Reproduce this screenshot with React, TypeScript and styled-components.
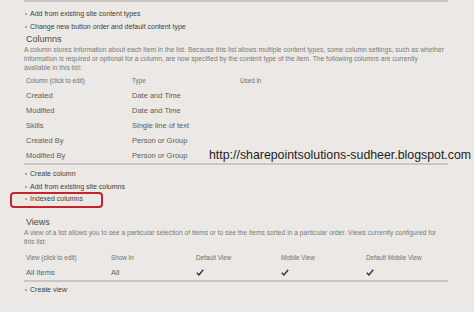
import React from "react";
import styled, { createGlobalStyle } from "styled-components";

const GlobalStyle = createGlobalStyle`
    html, body {
        margin: 0;
        padding: 0;
        background: #ebe8e5;
    }
    body {
        font-family: "Liberation Sans", Arial, sans-serif;
        color: #555;
    }
`

const columns = [
    {name: "Created", type: "Date and Time"},
    {name: "Modified", type: "Date and Time"},
    {name: "Skills", type: "Single line of text"},
    {name: "Created By", type: "Person or Group"},
    {name: "Modified By", type: "Person or Group"},
]

const Check = () => (
    <svg width="8" height="7" viewBox="0 0 8 7">
        <path d="M0.8 3.8 L2.9 5.9 L7.2 0.8" fill="none" stroke="#333" strokeWidth="1.4"/>
    </svg>
)

export default function App() {
    return (
        <Page>
            <GlobalStyle/>
            <Content>
                <Links $gap={2}>
                    <LinkItem>Add from existing site content types</LinkItem>
                    <LinkItem>Change new button order and default content type</LinkItem>
                </Links>
                <SectionTitle>Columns</SectionTitle>
                <Description>
                    A column stores information about each item in the list. Because this list allows multiple content types, some column settings, such as whether<br/>
                    information is required or optional for a column, are now specified by the content type of the item. The following columns are currently<br/>
                    available in this list:
                </Description>
                <ColumnTable>
                    <HeadCell>Column (click to edit)</HeadCell>
                    <HeadCell>Type</HeadCell>
                    <HeadCell>Used in</HeadCell>
                    {columns.map(c => (
                        <React.Fragment key={c.name}>
                            <Cell>{c.name}</Cell>
                            <Cell>{c.type}</Cell>
                            <Cell/>
                        </React.Fragment>
                    ))}
                    <Watermark>http://sharepointsolutions-sudheer.blogspot.com</Watermark>
                </ColumnTable>
                <Links $gap={3}>
                    <LinkItem>Create column</LinkItem>
                    <LinkItem>Add from existing site columns</LinkItem>
                    <LinkItem $marked>Indexed columns</LinkItem>
                </Links>
                <SectionTitle $views>Views</SectionTitle>
                <Description>
                    A view of a list allows you to see a particular selection of items or to see the items sorted in a particular order. Views currently configured for<br/>
                    this list:
                </Description>
                <ViewTable>
                    <HeadCell>View (click to edit)</HeadCell>
                    <HeadCell>Show In</HeadCell>
                    <HeadCell>Default View</HeadCell>
                    <HeadCell>Mobile View</HeadCell>
                    <HeadCell>Default Mobile View</HeadCell>
                    <Cell>All Items</Cell>
                    <Cell>All</Cell>
                    <Cell><Check/></Cell>
                    <Cell><Check/></Cell>
                    <Cell><Check/></Cell>
                </ViewTable>
                <Links $gap={2}>
                    <LinkItem>Create view</LinkItem>
                </Links>
            </Content>
        </Page>
    )
}

const Page = styled.div`
    width: 474px;
    height: 312px;
    overflow: hidden;
    position: relative;
`

const Content = styled.div`
    margin-left: 24px;
    width: 424px;
    padding-top: 4px;
    border-top: 2px solid #c9c6c3;
    display: flex;
    flex-direction: column;
`

const Links = styled.ul<{ $gap: number }>`
    list-style: none;
    margin: 0;
    padding: ${p => p.$gap}px 0 0;
`

const LinkItem = styled.li<{ $marked?: boolean }>`
    position: relative;
    height: 12.5px;
    line-height: 12.5px;
    padding-left: 6px;
    font-size: 7px;
    color: #3f3f3f;

    &::before {
        content: "";
        position: absolute;
        left: 1px;
        top: 5px;
        width: 2px;
        height: 2px;
        background: #a8a6a4;
    }

    ${p => p.$marked && `
        &::after {
            content: "";
            position: absolute;
            left: -14px;
            top: -1px;
            width: 89px;
            height: 12px;
            border: 2px solid #c4242b;
            border-radius: 4px;
        }
    `}
`

const SectionTitle = styled.h3<{ $views?: boolean }>`
    margin: ${p => p.$views ? "10px 0 0 2px" : "0 0 0 2px"};
    font-size: 9px;
    font-weight: normal;
    line-height: 12px;
    color: #4a4a4a;
`

const Description = styled.p`
    margin: 0;
    font-size: 6.7px;
    line-height: 9px;
    color: #7a7a7a;
    white-space: nowrap;
`

const ColumnTable = styled.div`
    position: relative;
    display: grid;
    grid-template-columns: 106px 108px 1fr;
    grid-auto-rows: 15px;
    padding-left: 2px;
    margin-top: 1px;
    border-bottom: 2px solid #c9c6c3;
`

const ViewTable = styled.div`
    display: grid;
    grid-template-columns: 85px 85px 85px 85px 1fr;
    grid-auto-rows: 15px;
    padding-left: 2px;
    margin-top: 4px;
    border-bottom: 2px solid #c9c6c3;
`

const HeadCell = styled.div`
    font-size: 6.3px;
    line-height: 15px;
    color: #6f6f6f;
`

const Cell = styled.div`
    font-size: 7.5px;
    line-height: 15px;
    color: #5e5e5e;
    display: flex;
    align-items: center;
`

const Watermark = styled.div`
    position: absolute;
    left: 185px;
    bottom: 1px;
    font-size: 12.35px;
    line-height: 14px;
    color: #1e1e1e;
    white-space: nowrap;
`
